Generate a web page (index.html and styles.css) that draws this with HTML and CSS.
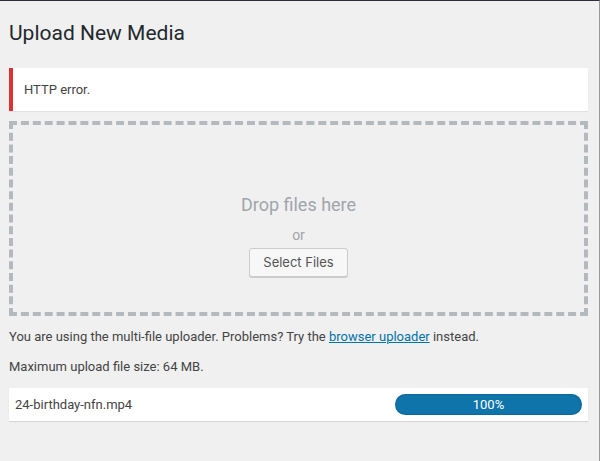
FILE: index.html
```html
<!DOCTYPE html>
<html lang="en">
<head>
<meta charset="utf-8">
<title>Upload New Media</title>
<link rel="stylesheet" href="styles.css">
</head>
<body>
<main class="page">
  <h1 class="title">Upload New Media</h1>
  <div class="notice" role="alert">
    <p>HTTP error.</p>
  </div>
  <section class="dropzone">
    <p class="drop-title">Drop files here</p>
    <p class="drop-or">or</p>
    <button class="button" type="button">Select Files</button>
  </section>
  <div class="hints">
    <p>You are using the multi-file uploader. Problems? Try the <a href="#">browser uploader</a> instead.</p>
    <p>Maximum upload file size: 64 MB.</p>
  </div>
  <div class="media-item">
    <span class="filename">24-birthday-nfn.mp4</span>
    <div class="progress" role="progressbar" aria-label="24-birthday-nfn.mp4" aria-valuenow="100" aria-valuemin="0" aria-valuemax="100">
      <div class="bar" style="width: 100%">100%</div>
    </div>
  </div>
</main>
</body>
</html>
```
FILE: styles.css
```css
* {
  box-sizing: border-box;
}

body {
  margin: 0;
  background: #f0f0f0;
  color: #444;
  font: 13px/20px Roboto, "Liberation Sans", sans-serif;
}

.page {
  min-height: 100vh;
  padding: 16px 11px 16px 9px;
  border-top: 1px solid #322c38;
  border-right: 1px solid #999;
}

h1,
p {
  margin: 0;
}

.title {
  margin-bottom: 19px;
  color: #23282d;
  font-size: 21px;
  font-weight: 400;
  line-height: 32px;
}

.notice {
  margin-bottom: 10px;
  padding: 12px 11px 11px;
  border-left: 4px solid #dc3232;
  background: #fff;
  box-shadow: 0 1px 1px rgba(0, 0, 0, 0.06);
}

.dropzone {
  display: flex;
  flex-direction: column;
  align-items: center;
  height: 195px;
  padding-top: 64px;
  margin-bottom: 11px;
  border: 4px dashed #b4b9be;
}

.drop-title {
  margin-bottom: 4px;
  color: #a0a5aa;
  font-size: 18px;
  line-height: 32px;
}

.drop-or {
  margin-bottom: 3px;
  color: #a0a5aa;
  font-size: 14px;
}

.button {
  height: 29px;
  padding: 0 13px;
  border: 1px solid #ccc;
  border-radius: 3px;
  background: #f7f7f7;
  box-shadow: 0 1px 0 #ccc;
  color: #555;
  font: 13px/27px Inter, "Liberation Sans", sans-serif;
}

.hints {
  display: grid;
  gap: 10px;
  margin-bottom: 11px;
}

.hints a {
  color: #0073aa;
}

.media-item {
  display: flex;
  align-items: center;
  justify-content: space-between;
  min-height: 33px;
  padding: 6px;
  background: #fff;
  box-shadow: 0 1px 1px rgba(0, 0, 0, 0.1);
}

.progress {
  width: 33%;
  border-radius: 11px;
  background: #ddd;
}

.bar {
  border-radius: 11px;
  background: #0e74aa;
  box-shadow: inset 0 0 2px rgba(0, 0, 0, 0.3);
  color: #fff;
  line-height: 21px;
  text-align: center;
}
```
